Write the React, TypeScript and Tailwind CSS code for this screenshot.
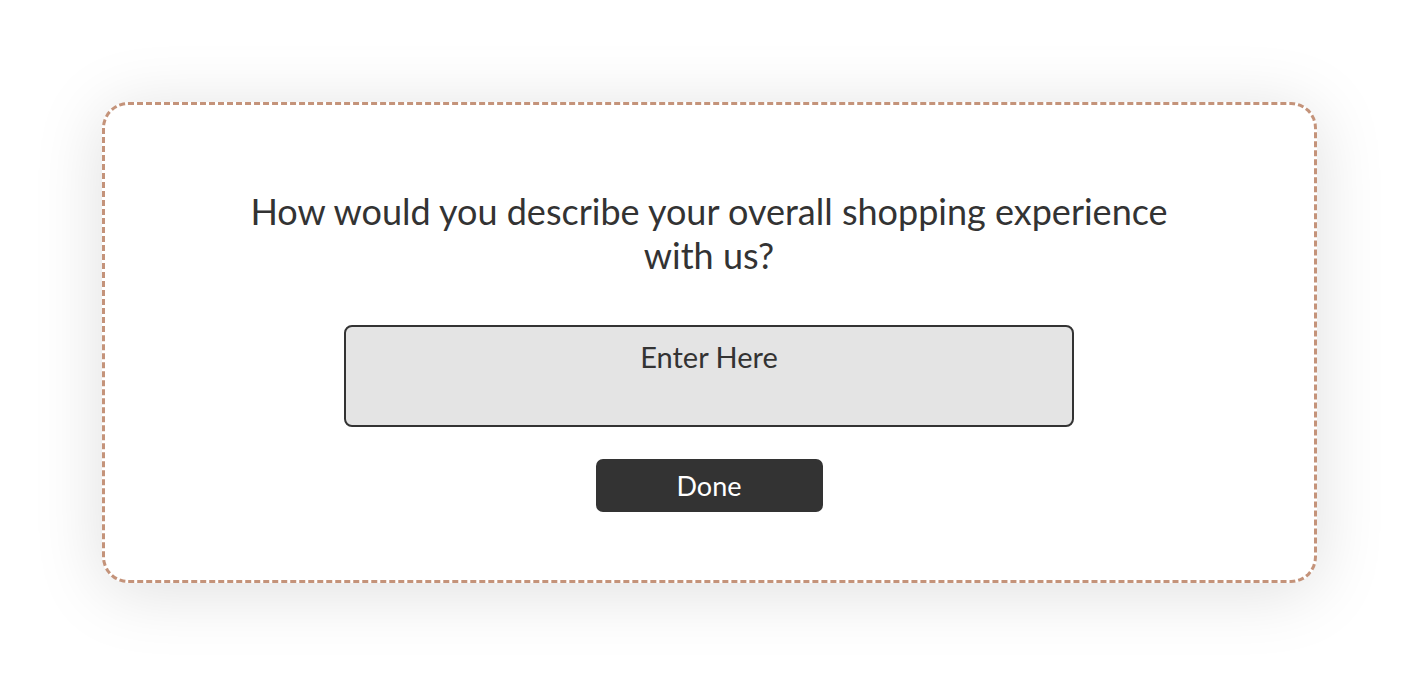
import React from "react";

export default function App() {
  return (
    <div className="flex h-[684px] w-full items-center justify-center bg-white font-['Lato','Open_Sans',sans-serif] text-[#333333]">
      <div className="flex h-[481px] w-[1215px] flex-col items-center rounded-[26px] border-[3px] border-dashed border-[#c4937a] bg-white pt-[84px] shadow-[0_8px_70px_rgba(0,0,0,0.13)]">
        <h1 className="text-center text-[36px] leading-[44px] font-normal">
          How would you describe your overall shopping experience
          <br />
          with us?
        </h1>

        <div className="mt-[48px] flex h-[102px] w-[730px] justify-center rounded-[8px] border-2 border-[#333333] bg-[#e4e4e4] pt-[12px]">
          <span className="text-[29px] leading-[36px]">Enter Here</span>
        </div>

        <button className="mt-[32px] flex h-[53px] w-[227px] items-center justify-center rounded-[7px] bg-[#333333] text-[27px] leading-none text-white">
          Done
        </button>
      </div>
    </div>
  );
}
